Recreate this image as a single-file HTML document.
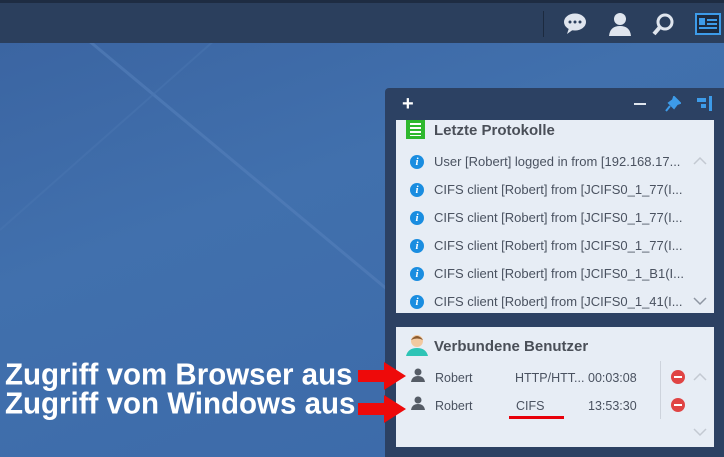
<!DOCTYPE html>
<html><head><meta charset="utf-8"><style>
*{margin:0;padding:0;box-sizing:border-box}
body{width:724px;height:457px;overflow:hidden;position:relative;font-family:"Liberation Sans",sans-serif;background:linear-gradient(160deg,#3a63a0 0%,#4170ad 40%,#3b69a8 100%)}
.top{position:absolute;left:0;top:0;width:724px;height:43px;background:#2b3f5d;border-top:3px solid #1e2c42}
.diag{position:absolute;left:0;top:0;width:724px;height:457px}
.panel{position:absolute;left:385px;top:88px;width:339px;height:369px;background:#2c4163;border-radius:4px 0 0 0}
.w{position:absolute;left:11px;width:318px;background:#e7edf5}
.w1{top:32px;height:193px}
.w2{top:239px;height:120px}
.row{position:absolute;left:0;font-size:13px;color:#4a5260;white-space:nowrap}
.w2 .row{font-size:12.5px}
.ic{position:absolute;left:14px;width:14px;height:14px;border-radius:50%;background:#1a8de0;color:#fff;font:italic bold 11px "Liberation Serif",serif;text-align:center;line-height:14px}
.h{position:absolute;left:38px;font-weight:bold;font-size:15px;color:#4a4f58}
.big{position:absolute;left:5px;color:#fff;font-weight:bold;font-size:29.5px;font-family:"Liberation Sans",sans-serif;white-space:nowrap;transform:scaleY(1.05)}
.chev{position:absolute;left:297px}
</style></head><body>
<svg class="diag" width="724" height="457"><path d="M40 0 L400 300" stroke="#5580bb" stroke-width="3" opacity=".6"/><path d="M0 230 L260 0" stroke="#4a76b1" stroke-width="2" opacity=".5"/></svg>
<div class="top">
<div style="position:absolute;left:543px;top:8px;width:1px;height:26px;background:#1c2a3f"></div>
<svg style="position:absolute;left:563px;top:10px" width="24" height="22"><ellipse cx="12" cy="9" rx="11" ry="8.5" fill="#dfe5ee"/><path d="M6 15 L4 21 L11 16z" fill="#dfe5ee"/><circle cx="7" cy="9" r="1.5" fill="#2b3f5d"/><circle cx="12" cy="9" r="1.5" fill="#2b3f5d"/><circle cx="17" cy="9" r="1.5" fill="#2b3f5d"/></svg>
<svg style="position:absolute;left:608px;top:9px" width="24" height="24"><circle cx="12" cy="7" r="6" fill="#dfe5ee"/><path d="M1 24 Q2 14 12 14 Q22 14 23 24z" fill="#dfe5ee"/></svg>
<svg style="position:absolute;left:651px;top:9px" width="24" height="24"><circle cx="14" cy="10" r="7" fill="none" stroke="#dfe5ee" stroke-width="3"/><path d="M9 15 L3 22" stroke="#dfe5ee" stroke-width="4"/></svg>
<svg style="position:absolute;left:695px;top:10px" width="26" height="22"><rect x="1" y="1" width="24" height="20" fill="#1c2a3f" stroke="#3d9be9" stroke-width="2"/><rect x="4" y="5" width="6" height="7" fill="#3d9be9"/><rect x="12" y="6" width="10" height="2" fill="#3d9be9"/><rect x="12" y="10" width="10" height="2" fill="#3d9be9"/><rect x="4" y="14" width="18" height="2" fill="#3d9be9"/></svg>
</div>
<div class="panel">
<div style="position:absolute;left:17px;top:5px;color:#fff;font-size:20px;font-weight:bold">+</div>
<div style="position:absolute;left:249px;top:15px;width:12px;height:2px;background:#dfe5ee"></div>
<svg style="position:absolute;left:280px;top:8px" width="16" height="16"><path d="M9 1 L15 7 L12 8 L9 12 L4 7 L8 4z M5 10 L1 15" fill="#3d9be9" stroke="#3d9be9" stroke-width="2"/></svg>
<svg style="position:absolute;left:312px;top:8px" width="16" height="16"><rect x="0" y="2" width="9" height="4" fill="#3d9be9"/><rect x="4" y="8" width="5" height="4" fill="#3d9be9"/><rect x="12" y="0" width="3" height="15" fill="#3d9be9"/></svg>
<div class="w w1">
<div style="position:absolute;left:10px;top:0;width:19px;height:19px;background:#2eb82e"></div>
<div style="position:absolute;left:14px;top:3px;width:11px;height:13px;background:repeating-linear-gradient(#fff 0 2px,transparent 2px 4px)"></div>
<div class="h" style="top:2px">Letzte Protokolle</div>
<div class="row" style="top:34px"><span class="ic" style="top:1px">i</span><span style="position:absolute;left:38px">User [Robert] logged in from [192.168.17...</span></div>
<svg class="chev" style="top:36px" width="14" height="10"><path d="M1 8 L7 2 L13 8" fill="none" stroke="#c3c9d2" stroke-width="1.5"/></svg>
<div class="row" style="top:62px"><span class="ic" style="top:1px">i</span><span style="position:absolute;left:38px">CIFS client [Robert] from [JCIFS0_1_77(I...</span></div>
<div class="row" style="top:90px"><span class="ic" style="top:1px">i</span><span style="position:absolute;left:38px">CIFS client [Robert] from [JCIFS0_1_77(I...</span></div>
<div class="row" style="top:118px"><span class="ic" style="top:1px">i</span><span style="position:absolute;left:38px">CIFS client [Robert] from [JCIFS0_1_77(I...</span></div>
<div class="row" style="top:146px"><span class="ic" style="top:1px">i</span><span style="position:absolute;left:38px">CIFS client [Robert] from [JCIFS0_1_B1(I...</span></div>
<div class="row" style="top:174px"><span class="ic" style="top:1px">i</span><span style="position:absolute;left:38px">CIFS client [Robert] from [JCIFS0_1_41(I...</span></div>
<svg class="chev" style="top:176px" width="14" height="10"><path d="M1 2 L7 8 L13 2" fill="none" stroke="#8e96a2" stroke-width="1.5"/></svg>
</div>
<div class="w w2">
<svg style="position:absolute;left:9px;top:7px" width="24" height="22"><circle cx="12" cy="7" r="6" fill="#f2c9a0"/><path d="M6 6 Q12 -2 18 6 Q12 3 6 6z" fill="#8a5a2e"/><path d="M1 22 Q3 14 12 14 Q21 14 23 22z" fill="#2ec4b6"/></svg>
<div class="h" style="top:11px">Verbundene Benutzer</div>
<svg style="position:absolute;left:15px;top:41px" width="14" height="14"><circle cx="7" cy="4" r="3.5" fill="#555c66"/><path d="M0 14 Q1 8 7 8 Q13 8 14 14z" fill="#555c66"/></svg>
<div class="row" style="top:44px;left:39px">Robert</div>
<div class="row" style="top:44px;left:119px">HTTP/HTT...</div>
<div class="row" style="top:44px;left:192px">00:03:08</div>
<svg style="position:absolute;left:15px;top:69px" width="14" height="14"><circle cx="7" cy="4" r="3.5" fill="#555c66"/><path d="M0 14 Q1 8 7 8 Q13 8 14 14z" fill="#555c66"/></svg>
<div class="row" style="top:72px;left:39px">Robert</div>
<div class="row" style="top:72px;left:120px">CIFS</div>
<div class="row" style="top:72px;left:192px">13:53:30</div>
<div style="position:absolute;left:113px;top:89px;width:55px;height:3px;background:#e8000a"></div>
<div style="position:absolute;left:264px;top:34px;width:1px;height:58px;background:#cdd3dc"></div>
<div style="position:absolute;left:275px;top:43px;width:14px;height:14px;border-radius:50%;background:#e04444"><div style="margin:6px 3px;height:2px;background:#fff"></div></div>
<div style="position:absolute;left:275px;top:71px;width:14px;height:14px;border-radius:50%;background:#e04444"><div style="margin:6px 3px;height:2px;background:#fff"></div></div>
<svg class="chev" style="top:45px" width="14" height="10"><path d="M1 8 L7 2 L13 8" fill="none" stroke="#c3c9d2" stroke-width="1.5"/></svg>
<svg class="chev" style="top:100px" width="14" height="10"><path d="M1 2 L7 8 L13 2" fill="none" stroke="#c3c9d2" stroke-width="1.5"/></svg>
</div>
</div>
<div class="big" style="top:358px">Zugriff vom Browser aus</div>
<div class="big" style="top:387px">Zugriff von Windows aus</div>
<svg style="position:absolute;left:358px;top:361px" width="50" height="64"><path d="M0 9 H26 V1 L48 15 L26 29 V21 H0z" fill="#ee0a0a"/><path d="M0 42 H26 V34 L48 48 L26 62 V54 H0z" fill="#ee0a0a"/></svg>
</body></html>
